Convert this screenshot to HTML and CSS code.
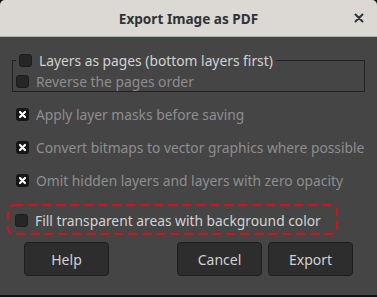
FILE: index.html
```html
<!DOCTYPE html>
<html lang="en">
<head>
    <meta charset="UTF-8">
    <title>Export Image as PDF</title>
    <link rel="stylesheet" href="styles.css">
</head>
<body>
    <div class="dialog">
        <header class="titlebar">
            <span></span>
            <span class="title">Export Image as PDF</span>
            <svg class="close" width="10" height="10" viewBox="0 0 10 10">
                <path d="M1.5 1.5 L8.5 8.5 M8.5 1.5 L1.5 8.5" stroke="#2e3436" stroke-width="2" stroke-linecap="round"/>
            </svg>
        </header>

        <main class="content">
            <fieldset class="frame">
                <legend>
                    <label class="row"><span class="box"></span><span>Layers as pages (bottom layers first)</span></label>
                </legend>
                <label class="row dim"><span class="box"></span><span>Reverse the pages order</span></label>
            </fieldset>

            <label class="row dim option"><span class="box checked"><svg width="13" height="13" viewBox="0 0 13 13"><path d="M4 4 L9 9 M9 4 L4 9" stroke="#fff" stroke-width="2.2" stroke-linecap="round"/></svg></span><span>Apply layer masks before saving</span></label>
            <label class="row dim option"><span class="box checked"><svg width="13" height="13" viewBox="0 0 13 13"><path d="M4 4 L9 9 M9 4 L4 9" stroke="#fff" stroke-width="2.2" stroke-linecap="round"/></svg></span><span>Convert bitmaps to vector graphics where possible</span></label>
            <label class="row dim option"><span class="box checked"><svg width="13" height="13" viewBox="0 0 13 13"><path d="M4 4 L9 9 M9 4 L4 9" stroke="#fff" stroke-width="2.2" stroke-linecap="round"/></svg></span><span>Omit hidden layers and layers with zero opacity</span></label>

            <div class="highlight">
                <svg class="dashes" width="100%" height="100%">
                    <rect x="1" y="1" width="329" height="29" rx="6" fill="none" stroke="#d3121c" stroke-width="2" stroke-dasharray="9 5"/>
                </svg>
                <label class="row"><span class="box"></span><span>Fill transparent areas with background color</span></label>
            </div>

            <div class="buttons">
                <button>Help</button>
                <span class="spacer"></span>
                <button>Cancel</button>
                <button>Export</button>
            </div>
        </main>
    </div>
</body>
</html>
```

FILE: styles.css
```css
html, body {
    margin: 0;
    padding: 0;
    background-color: #111;
}

body {
    font-family: "Noto Sans", "Open Sans", sans-serif;
    width: 377px;
    height: 297px;
    overflow: hidden;
}

.dialog {
    height: 295px;
    background-color: #454545;
    border-radius: 5px 5px 0 0;
    overflow: hidden;
}

.titlebar {
    display: grid;
    grid-template-columns: 1fr auto 1fr;
    align-items: center;
    height: 36px;
    background-color: #dcd9d5;
    border-bottom: 1px solid #b4b1ad;
}

.title {
    font-size: 13.6px;
    font-weight: bold;
    color: #2e3436;
}

.close {
    justify-self: end;
    margin-right: 13px;
}

.content {
    padding-top: 14px;
}

.frame {
    margin: 0 12px;
    padding: 0 3px 1px 3px;
    border: 1px solid #222;
}

.frame legend {
    padding: 0 3px;
}

.row {
    display: flex;
    align-items: center;
    gap: 7px;
    height: 18px;
    font-size: 13.8px;
    color: #d2d2d2;
    white-space: nowrap;
}

.frame .row.dim {
    margin-top: 3px;
}

.dim {
    color: #8e8e8e;
}

.box {
    width: 13px;
    height: 13px;
    box-sizing: border-box;
    flex: none;
    background-color: #262626;
    border: 1px solid #1c1c1c;
    border-radius: 3px;
}

.box.checked {
    background-color: #161616;
    border: none;
}

.box svg {
    display: block;
}

.option {
    margin: 15px 0 0 16px;
}

.option:first-of-type {
    margin-top: 13px;
}

.highlight {
    position: relative;
    width: 332px;
    height: 31px;
    box-sizing: border-box;
    margin: 15px 0 0 7px;
    padding: 7px 0 0 8px;
}

.dashes {
    position: absolute;
    left: 0;
    top: 0;
}

.buttons {
    display: flex;
    gap: 6px;
    padding: 7px 24px 0 24px;
}

.spacer {
    flex: 1;
}

.buttons button {
    width: 85px;
    height: 34px;
    font-family: inherit;
    font-size: 14px;
    color: #d2d2d2;
    background-color: #2d2d2d;
    border: 1px solid #1d1d1d;
    border-radius: 4px;
}
```
